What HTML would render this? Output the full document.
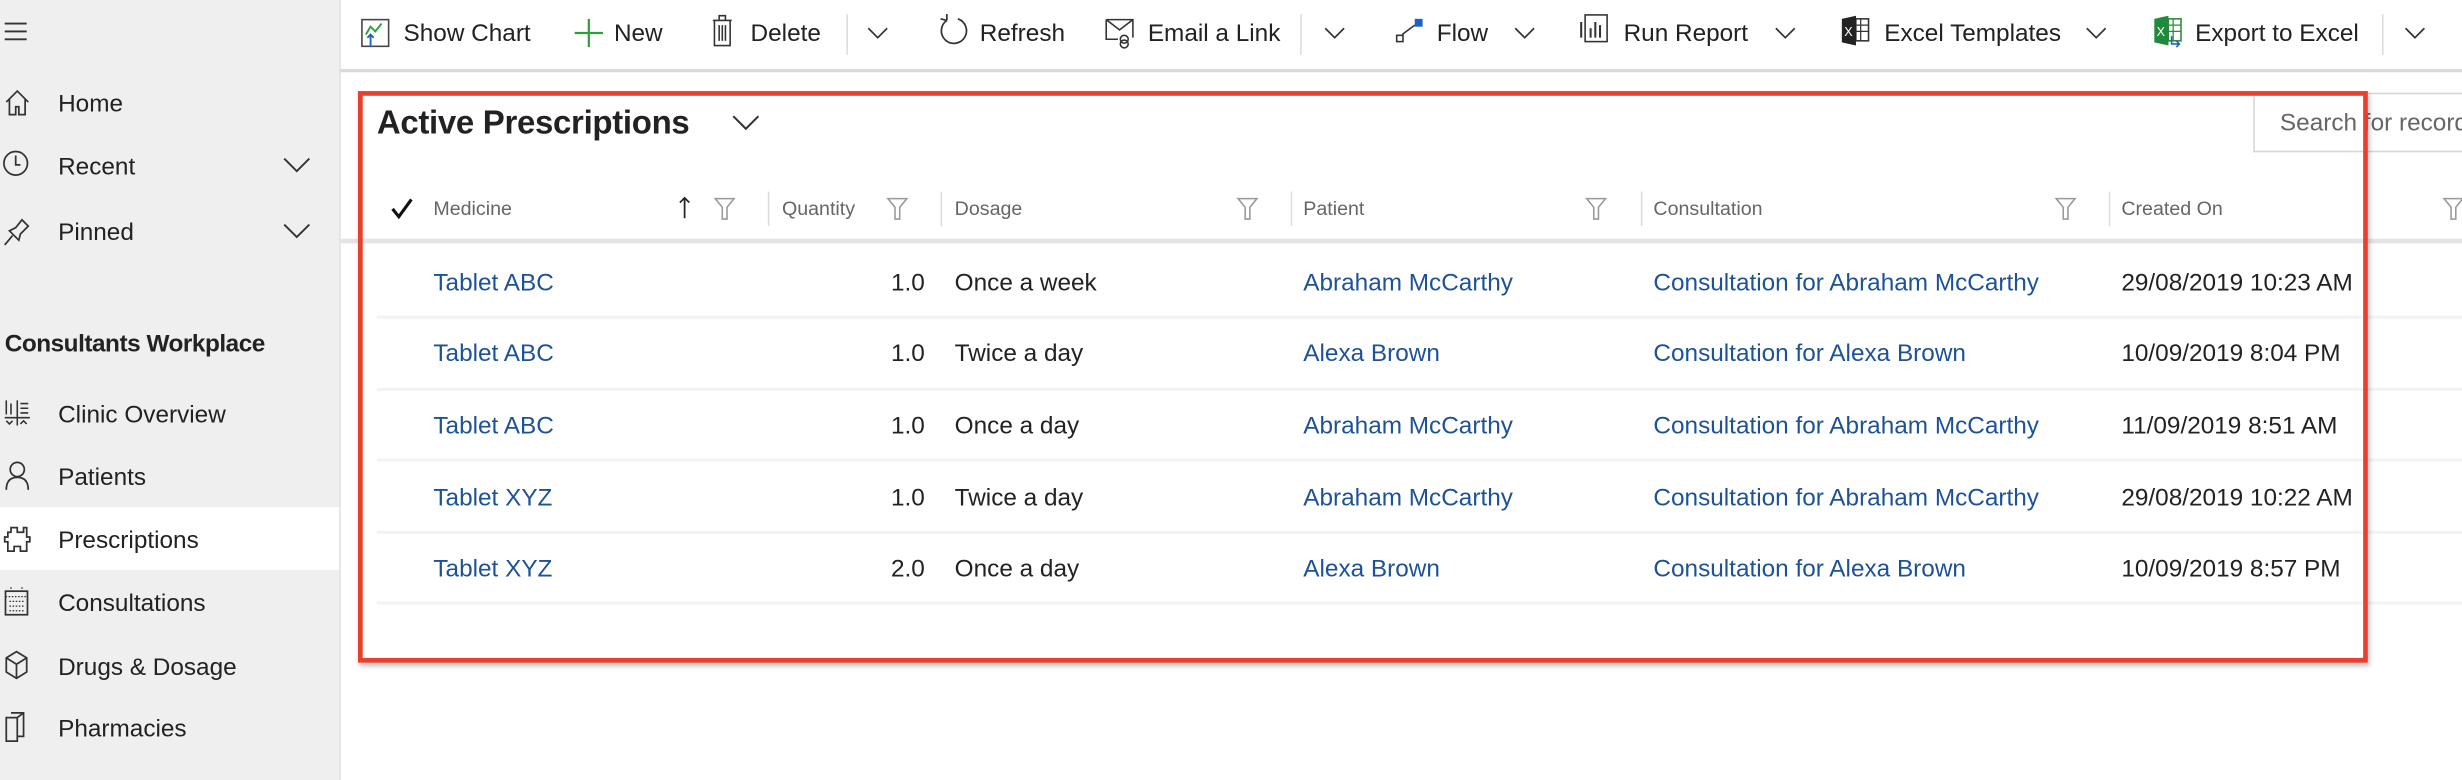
<!DOCTYPE html>
<html><head><meta charset="utf-8"><style>
html,body{margin:0;padding:0;width:2462px;height:780px;overflow:hidden;background:#fff}
#w{position:absolute;left:0;top:0;width:1568px;height:497px;transform:scale(1.5702);transform-origin:0 0;font-family:"Liberation Sans",sans-serif;color:#222}
.a{position:absolute;white-space:nowrap}
.side{position:absolute;left:0;top:0;width:216px;height:497px;background:#efefef;border-right:1px solid #e2e2e2}
.nav{position:absolute;left:37px;font-size:15.5px;color:#222;line-height:20px}
.tb{font-size:15.5px;line-height:20px;top:12px}
.hd{font-size:12.5px;color:#666;top:125px;line-height:16px}
.sep{position:absolute;width:1px;background:#ddd}
.r{font-size:15.5px;line-height:20px}
.l{color:#1d5299}
.rl{position:absolute;left:240px;right:0;height:2px;background:#f3f3f3}
svg{position:absolute;overflow:visible}
</style></head><body><div id="w">
<div class="side"></div>
<svg style="left:3px;top:14px" width="14" height="12"><path d="M0 1H14M0 6H14M0 11H14" stroke="#333" stroke-width="1.2"/></svg>
<svg style="left:3px;top:57px" width="16" height="17"><path d="M1 8L8 1L15 8M3 6V16H7V11H9V16H13V6" fill="none" stroke="#333" stroke-width="1.1"/></svg>
<div class="nav" style="top:57px">Home</div>
<svg style="left:2px;top:96px" width="17" height="17"><circle cx="8" cy="8" r="7.5" fill="none" stroke="#333" stroke-width="1.1"/><path d="M8 3V9H11" fill="none" stroke="#333" stroke-width="1.1"/></svg>
<div class="nav" style="top:97px">Recent</div>
<svg style="left:180px;top:100px" width="18" height="10"><path d="M1 1L9 9L17 1" fill="none" stroke="#333" stroke-width="1.2"/></svg>
<svg style="left:2px;top:138px" width="18" height="19"><path d="M1 18L6 12M4 9L10 15L11 11L16 6L12 2L8 7Z" fill="none" stroke="#333" stroke-width="1.1"/></svg>
<div class="nav" style="top:139px">Pinned</div>
<svg style="left:180px;top:142px" width="18" height="10"><path d="M1 1L9 9L17 1" fill="none" stroke="#333" stroke-width="1.2"/></svg>
<div class="a" style="left:3px;top:211px;font-size:15.5px;color:#222;font-weight:600;letter-spacing:-0.3px">Consultants Workplace</div>
<svg style="left:3px;top:255px" width="16" height="16"><path d="M1 0V9M4 2V9M8 0V16M10 2H15M10 5H15M10 8H15M0 11H16M1 13L3 15L5 13M10 15L12 13L14 15" fill="none" stroke="#333" stroke-width="1"/></svg>
<div class="nav" style="top:255px">Clinic Overview</div>
<svg style="left:3px;top:294px" width="16" height="18"><circle cx="8" cy="5" r="4.5" fill="none" stroke="#333" stroke-width="1.1"/><path d="M1 18C1 12 4 10 8 10C12 10 15 12 15 18" fill="none" stroke="#333" stroke-width="1.1"/></svg>
<div class="nav" style="top:295px">Patients</div>
<div class="a" style="left:0;top:323px;width:216px;height:40px;background:#fff"></div>
<svg style="left:3px;top:335px" width="16" height="17"><path d="M4 1H8V4H12V1H14V7H16V10H14V16H10V13H6V16H2V10H0V7H2V4H4Z" fill="none" stroke="#333" stroke-width="1.1"/></svg>
<div class="nav" style="top:335px">Prescriptions</div>
<svg style="left:3px;top:374px" width="15" height="18"><rect x="0.5" y="2.5" width="14" height="15" fill="none" stroke="#333" stroke-width="1.1"/><path d="M0.5 6H14.5M4 0V4M11 0V4M3 9H12M3 12H12M3 15H12" stroke="#333" stroke-width="0.8" stroke-dasharray="1 1"/></svg>
<div class="nav" style="top:375px">Consultations</div>
<svg style="left:3px;top:414px" width="15" height="19"><path d="M7.5 1L14 5V14L7.5 18L1 14V5Z M1 5L7.5 9L14 5 M7.5 9V18" fill="none" stroke="#333" stroke-width="1.1"/></svg>
<div class="nav" style="top:416px">Drugs &amp; Dosage</div>
<svg style="left:3px;top:453px" width="16" height="20"><path d="M1 4H8V19H1Z M4 1H12V16H8 M8 4L12 1" fill="none" stroke="#333" stroke-width="1.1"/></svg>
<div class="nav" style="top:455px">Pharmacies</div>

<div class="a" style="left:217px;top:44px;width:1351px;height:2px;background:#d9d9d9"></div>
<svg style="left:230px;top:12px" width="18" height="18"><rect x="0.5" y="0.5" width="17" height="17" fill="none" stroke="#444"/><path d="M3 10L6 5L9 8L13 3" fill="none" stroke="#2e9e3a" stroke-width="1.2"/><path d="M6 18V10M4 12L6 10L8 12" fill="none" stroke="#1e62c8" stroke-width="1.2"/></svg>
<div class="a tb" style="left:257px">Show Chart</div>
<svg style="left:366px;top:12px" width="18" height="18"><path d="M9 0V18M0 9H18" stroke="#2e9e3a" stroke-width="1.4"/></svg>
<div class="a tb" style="left:391px">New</div>
<svg style="left:453px;top:9px" width="14" height="21"><path d="M1 4H13M5 4V1H9V4M2 4V20H12V4M5 7V17M7 7V17M9 7V17" fill="none" stroke="#333" stroke-width="1"/></svg>
<div class="a tb" style="left:478px">Delete</div>
<div class="sep" style="left:539px;top:9px;height:26px"></div>
<svg style="left:552px;top:17px" width="14" height="8"><path d="M1 1L7 7L13 1" fill="none" stroke="#333" stroke-width="1.1"/></svg>
<svg style="left:597px;top:9px" width="20" height="21"><path d="M6 4A8 8 0 1 0 13 3M6 4L6 0M6 4L2 3" fill="none" stroke="#333" stroke-width="1.1"/></svg>
<div class="a tb" style="left:624px">Refresh</div>
<svg style="left:704px;top:12px" width="18" height="19"><path d="M0.5 0.5H17.5V12M0.5 0.5V13H8M0.5 0.5L9 7L17.5 0.5" fill="none" stroke="#333" stroke-width="1"/><circle cx="12" cy="13" r="2.5" fill="none" stroke="#333"/><circle cx="12" cy="16" r="2.5" fill="none" stroke="#333"/></svg>
<div class="a tb" style="left:731px">Email a Link</div>
<div class="sep" style="left:828px;top:9px;height:26px"></div>
<svg style="left:843px;top:17px" width="14" height="8"><path d="M1 1L7 7L13 1" fill="none" stroke="#333" stroke-width="1.1"/></svg>
<svg style="left:889px;top:12px" width="18" height="16"><rect x="0.5" y="10.5" width="4" height="4" fill="none" stroke="#333"/><path d="M4 10L12 4" stroke="#333"/><rect x="12" y="0" width="5" height="5" fill="#1e62c8"/></svg>
<div class="a tb" style="left:915px">Flow</div>
<svg style="left:964px;top:17px" width="14" height="8"><path d="M1 1L7 7L13 1" fill="none" stroke="#333" stroke-width="1.1"/></svg>
<svg style="left:1007px;top:9px" width="18" height="19"><rect x="2.5" y="0.5" width="14" height="17" fill="none" stroke="#333"/><path d="M6 15V9M9 15V5M12 15V7M0 5V15" stroke="#333" stroke-width="1.3"/></svg>
<div class="a tb" style="left:1034px">Run Report</div>
<svg style="left:1130px;top:17px" width="14" height="8"><path d="M1 1L7 7L13 1" fill="none" stroke="#333" stroke-width="1.1"/></svg>
<svg style="left:1173px;top:9px" width="18" height="21"><rect x="6" y="3" width="11" height="14" fill="none" stroke="#333"/><path d="M9 3V17M12 3V17M6 7H17M6 11H17" stroke="#333" stroke-width="0.8"/><path d="M0 3L9 1V20L0 18Z" fill="#222"/><text x="1.5" y="14" font-size="8" fill="#fff" font-family="Liberation Sans">X</text></svg>
<div class="a tb" style="left:1200px">Excel Templates</div>
<svg style="left:1328px;top:17px" width="14" height="8"><path d="M1 1L7 7L13 1" fill="none" stroke="#333" stroke-width="1.1"/></svg>
<svg style="left:1372px;top:9px" width="18" height="21"><rect x="6" y="3" width="11" height="14" fill="none" stroke="#2e8b3a"/><path d="M9 3V17M12 3V17M6 7H17M6 11H17" stroke="#2e8b3a" stroke-width="0.8"/><path d="M0 3L9 1V20L0 18Z" fill="#1f8a3c"/><text x="1.5" y="14" font-size="8" fill="#fff" font-family="Liberation Sans">X</text><path d="M11 14V19H16M14 17L16 19L14 21" fill="none" stroke="#1e62c8"/></svg>
<div class="a tb" style="left:1398px">Export to Excel</div>
<div class="sep" style="left:1517px;top:9px;height:26px"></div>
<svg style="left:1531px;top:17px" width="14" height="8"><path d="M1 1L7 7L13 1" fill="none" stroke="#333" stroke-width="1.1"/></svg>

<div class="a" style="left:1435px;top:59px;width:140px;height:36px;border:1px solid #d6d6d6;border-right:none"></div>
<div class="a" style="left:1452px;top:69px;font-size:15.5px;color:#666;line-height:20px">Search for records</div>

<div class="a" style="left:240px;top:66px;font-size:21px;font-weight:bold;color:#222;line-height:26px;letter-spacing:-0.2px">Active Prescriptions</div>
<svg style="left:466px;top:73px" width="18" height="10"><path d="M1 1L9 9L17 1" fill="none" stroke="#333" stroke-width="1.3"/></svg>

<svg style="left:249px;top:126px" width="14" height="13"><path d="M1 7L5 12L13 1" fill="none" stroke="#111" stroke-width="2"/></svg>
<div class="a hd" style="left:276px">Medicine</div>
<svg style="left:432px;top:125px" width="8" height="14"><path d="M4 14V1M1 4L4 1L7 4" fill="none" stroke="#222" stroke-width="1.1"/></svg>
<svg style="left:455px;top:126px" width="13" height="14"><path d="M0.5 0.5H12.5L8 6V13.5H5V6Z" fill="none" stroke="#999"/></svg>
<div class="sep" style="left:489px;top:122px;height:22px"></div>
<div class="a hd" style="left:498px">Quantity</div>
<svg style="left:565px;top:126px" width="13" height="14"><path d="M0.5 0.5H12.5L8 6V13.5H5V6Z" fill="none" stroke="#999"/></svg>
<div class="sep" style="left:599px;top:122px;height:22px"></div>
<div class="a hd" style="left:608px">Dosage</div>
<svg style="left:788px;top:126px" width="13" height="14"><path d="M0.5 0.5H12.5L8 6V13.5H5V6Z" fill="none" stroke="#999"/></svg>
<div class="sep" style="left:822px;top:122px;height:22px"></div>
<div class="a hd" style="left:830px">Patient</div>
<svg style="left:1010px;top:126px" width="13" height="14"><path d="M0.5 0.5H12.5L8 6V13.5H5V6Z" fill="none" stroke="#999"/></svg>
<div class="sep" style="left:1045px;top:122px;height:22px"></div>
<div class="a hd" style="left:1053px">Consultation</div>
<svg style="left:1309px;top:126px" width="13" height="14"><path d="M0.5 0.5H12.5L8 6V13.5H5V6Z" fill="none" stroke="#999"/></svg>
<div class="sep" style="left:1343px;top:122px;height:22px"></div>
<div class="a hd" style="left:1351px">Created On</div>
<svg style="left:1556px;top:126px" width="13" height="14"><path d="M0.5 0.5H12.5L8 6V13.5H5V6Z" fill="none" stroke="#999"/></svg>
<div class="a" style="left:217px;top:152px;width:1351px;height:3px;background:#e4e4e4"></div>

<div class="a r l" style="left:276px;top:171px">Tablet ABC</div><div class="a r" style="left:520px;width:69px;text-align:right;top:171px">1.0</div><div class="a r" style="left:608px;top:171px">Once a week</div><div class="a r l" style="left:830px;top:171px">Abraham McCarthy</div><div class="a r l" style="left:1053px;top:171px">Consultation for Abraham McCarthy</div><div class="a r" style="left:1351px;top:171px">29/08/2019 10:23 AM</div>
<div class="rl" style="top:201px"></div>
<div class="a r l" style="left:276px;top:216px">Tablet ABC</div><div class="a r" style="left:520px;width:69px;text-align:right;top:216px">1.0</div><div class="a r" style="left:608px;top:216px">Twice a day</div><div class="a r l" style="left:830px;top:216px">Alexa Brown</div><div class="a r l" style="left:1053px;top:216px">Consultation for Alexa Brown</div><div class="a r" style="left:1351px;top:216px">10/09/2019 8:04 PM</div>
<div class="rl" style="top:247px"></div>
<div class="a r l" style="left:276px;top:262px">Tablet ABC</div><div class="a r" style="left:520px;width:69px;text-align:right;top:262px">1.0</div><div class="a r" style="left:608px;top:262px">Once a day</div><div class="a r l" style="left:830px;top:262px">Abraham McCarthy</div><div class="a r l" style="left:1053px;top:262px">Consultation for Abraham McCarthy</div><div class="a r" style="left:1351px;top:262px">11/09/2019 8:51 AM</div>
<div class="rl" style="top:292px"></div>
<div class="a r l" style="left:276px;top:308px">Tablet XYZ</div><div class="a r" style="left:520px;width:69px;text-align:right;top:308px">1.0</div><div class="a r" style="left:608px;top:308px">Twice a day</div><div class="a r l" style="left:830px;top:308px">Abraham McCarthy</div><div class="a r l" style="left:1053px;top:308px">Consultation for Abraham McCarthy</div><div class="a r" style="left:1351px;top:308px">29/08/2019 10:22 AM</div>
<div class="rl" style="top:338px"></div>
<div class="a r l" style="left:276px;top:353px">Tablet XYZ</div><div class="a r" style="left:520px;width:69px;text-align:right;top:353px">2.0</div><div class="a r" style="left:608px;top:353px">Once a day</div><div class="a r l" style="left:830px;top:353px">Alexa Brown</div><div class="a r l" style="left:1053px;top:353px">Consultation for Alexa Brown</div><div class="a r" style="left:1351px;top:353px">10/09/2019 8:57 PM</div>
<div class="rl" style="top:383px"></div>

<div class="a" style="left:228px;top:58px;width:1274px;height:358px;border:3px solid #e8402c;box-shadow:1px 2px 3px rgba(0,0,0,0.25)"></div>
</div></body></html>
